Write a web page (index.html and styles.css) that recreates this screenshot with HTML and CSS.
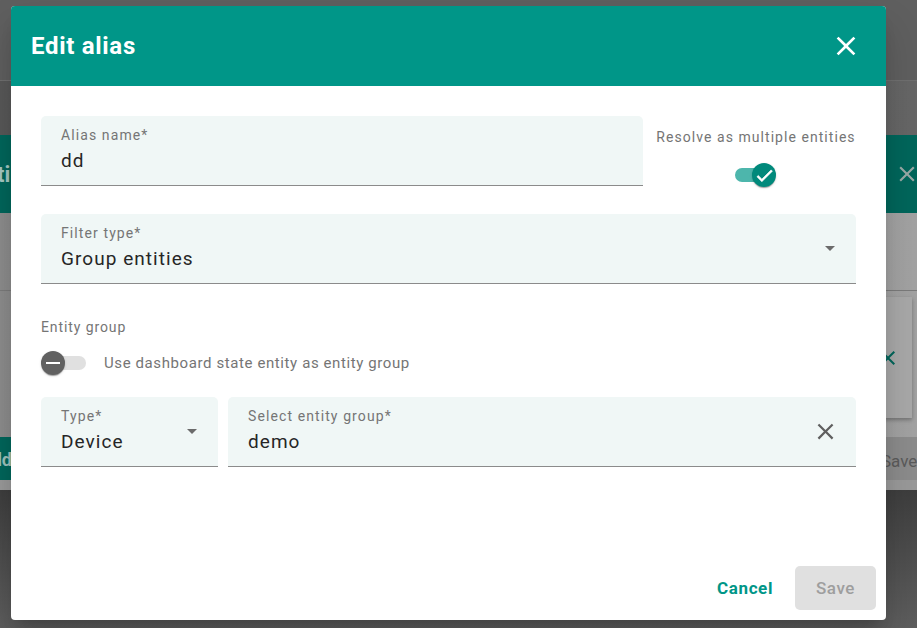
FILE: index.html
```html
<!DOCTYPE html>
<html lang="en">
<head>
  <meta charset="UTF-8" />
  <meta name="viewport" content="width=device-width, initial-scale=1.0" />
  <title>Edit alias</title>
  <link rel="stylesheet" href="styles.css">
</head>
<body>

  <!-- page behind the modal, dimmed -->
  <div class="backdrop">
    <div class="bg-top"></div>
    <div class="bg-gap"></div>
    <div class="bg-head">
      <span class="bg-title">ti</span>
      <svg class="bg-close" viewBox="0 0 24 24"><path d="M19 6.41L17.59 5 12 10.59 6.41 5 5 6.41 10.59 12 5 17.59 6.41 19 12 13.41 17.59 19 19 17.59 13.41 12z"/></svg>
    </div>
    <div class="bg-body">
      <div class="bg-toolbar"></div>
      <div class="bg-list">
        <div class="bg-card">
          <svg class="bg-card-icon" viewBox="0 0 24 24"><path d="M19 6.41L17.59 5 12 10.59 6.41 5 5 6.41 10.59 12 5 17.59 6.41 19 12 13.41 17.59 19 19 17.59 13.41 12z"/></svg>
        </div>
      </div>
      <div class="bg-actions">
        <span class="bg-add">Add</span>
        <span class="bg-save">Save</span>
      </div>
      <div class="bg-foot"></div>
    </div>
    <div class="bg-bottom"></div>
  </div>

  <div class="overlay">
    <div class="dialog">
      <div class="dialog-header">
        <h2>Edit alias</h2>
        <button class="icon-btn">
          <svg viewBox="0 0 24 24"><path d="M19 6.41L17.59 5 12 10.59 6.41 5 5 6.41 10.59 12 5 17.59 6.41 19 12 13.41 17.59 19 19 17.59 13.41 12z"/></svg>
        </button>
      </div>

      <div class="dialog-content">
        <div class="row first-row">
          <div class="field grow">
            <label>Alias name*</label>
            <div class="value">dd</div>
          </div>
          <div class="resolve">
            <span class="hint">Resolve as multiple entities</span>
            <div class="switch on">
              <div class="track"></div>
              <div class="thumb">
                <svg viewBox="0 0 24 24"><path d="M9 16.17L4.83 12l-1.42 1.41L9 19 21 7l-1.41-1.41z"/></svg>
              </div>
            </div>
          </div>
        </div>

        <div class="field select gap-top">
          <label>Filter type*</label>
          <div class="value">Group entities</div>
          <svg class="arrow" viewBox="0 0 24 24"><path d="M7 10l5 5 5-5z"/></svg>
        </div>

        <div class="section-label">Entity group</div>
        <div class="toggle-row">
          <div class="switch off">
            <div class="track"></div>
            <div class="thumb"><span class="minus"></span></div>
          </div>
          <span class="hint">Use dashboard state entity as entity group</span>
        </div>

        <div class="row group-row">
          <div class="field select type">
            <label>Type*</label>
            <div class="value">Device</div>
            <svg class="arrow" viewBox="0 0 24 24"><path d="M7 10l5 5 5-5z"/></svg>
          </div>
          <div class="field grow">
            <label>Select entity group*</label>
            <div class="value">demo</div>
            <svg class="clear" viewBox="0 0 24 24"><path d="M19 6.41L17.59 5 12 10.59 6.41 5 5 6.41 10.59 12 5 17.59 6.41 19 12 13.41 17.59 19 19 17.59 13.41 12z"/></svg>
          </div>
        </div>
      </div>

      <div class="dialog-actions">
        <button class="btn-text">Cancel</button>
        <button class="btn-flat" disabled>Save</button>
      </div>
    </div>
  </div>

</body>
</html>
```

FILE: styles.css
```css
html, body {
  margin: 0;
  height: 100%;
  overflow: hidden;
}

body {
  font-family: Roboto, 'Liberation Sans', sans-serif;
  background: #5c5c5c;
  position: relative;
}

/* ---------- dimmed page behind ---------- */

.backdrop {
  display: flex;
  flex-direction: column;
  height: 100%;
}

.bg-top {
  height: 81px;
  flex-shrink: 0;
  background: #5f5f5f;
  border-bottom: 1px solid #707070;
  box-sizing: border-box;
}

.bg-gap {
  height: 54px;
  flex-shrink: 0;
  background: linear-gradient(90deg, #585858, #666);
}

.bg-head {
  height: 78px;
  flex-shrink: 0;
  background: #00665b;
  display: flex;
  align-items: center;
  justify-content: space-between;
}

.bg-title {
  color: #a6c9c3;
  font-weight: bold;
  font-size: 22px;
  margin-left: -3px;
}

.bg-close {
  width: 26px;
  height: 26px;
  fill: #9aa9a6;
  margin-right: -3px;
}

.bg-body {
  flex-shrink: 0;
  background: linear-gradient(90deg, #8d8d8d, #a3a3a3);
}

.bg-toolbar {
  height: 78px;
  border-bottom: 1px solid #7b7b7b;
  box-sizing: border-box;
}

.bg-list {
  height: 146px;
  display: flex;
  justify-content: flex-end;
  padding-top: 6px;
  box-sizing: border-box;
}

.bg-card {
  width: 28px;
  height: 121px;
  margin-right: 5px;
  background: #a9a9a9;
  box-shadow: 0 2px 4px rgba(0, 0, 0, 0.3);
  display: flex;
  align-items: center;
}

.bg-card-icon {
  width: 24px;
  height: 24px;
  fill: #00665b;
  margin-left: -8px;
}

.bg-actions {
  height: 43px;
  background: #8c8c8c;
  display: flex;
  align-items: center;
  justify-content: space-between;
}

.bg-add {
  background: #00665b;
  color: #9fc2bc;
  font-weight: bold;
  font-size: 18px;
  height: 100%;
  display: flex;
  align-items: flex-end;
  padding: 0 0 10px 0;
  margin-left: -22px;
  box-sizing: border-box;
  width: 34px;
  justify-content: flex-end;
}

.bg-save {
  color: #5b5b5b;
  font-size: 17px;
  padding-top: 4px;
  width: 36px;
}

.bg-foot {
  height: 10px;
  background: #9a9a9a;
}

.bg-bottom {
  flex: 1;
  background: linear-gradient(180deg, #3e3e3e, #5e5e5e);
}

/* ---------- modal ---------- */

.overlay {
  position: absolute;
  inset: 0;
  display: flex;
  padding: 6px 31px 8px 11px;
  box-sizing: border-box;
}

.dialog {
  flex: 1;
  display: flex;
  flex-direction: column;
  background: #fff;
  border-radius: 4px;
  overflow: hidden;
  box-shadow: 0 11px 15px -7px rgba(0,0,0,0.2), 0 24px 38px 3px rgba(0,0,0,0.14);
}

.dialog-header {
  height: 80px;
  flex-shrink: 0;
  background: #009688;
  color: #fff;
  display: flex;
  align-items: center;
  justify-content: space-between;
  padding: 0 24px 0 20px;
}

.dialog-header h2 {
  margin: 0;
  font-size: 24px;
  font-weight: 700;
  letter-spacing: 0.7px;
}

.icon-btn {
  background: none;
  border: none;
  padding: 0;
  width: 32px;
  height: 32px;
  cursor: pointer;
}

.icon-btn svg {
  width: 32px;
  height: 32px;
  fill: #fff;
  display: block;
}

.dialog-content {
  flex: 1;
  padding: 30px 30px 0;
}

.row {
  display: flex;
  gap: 13px;
}

.first-row {
  height: 70px;
}

.grow {
  flex: 1;
}

.field {
  position: relative;
  height: 70px;
  box-sizing: border-box;
  padding: 10px 20px 0;
  background: #f0f7f6;
  border-radius: 5px 5px 0 0;
  border-bottom: 1px solid #8b8b8b;
}

.field label {
  display: block;
  font-size: 14px;
  line-height: 18px;
  color: #757575;
  letter-spacing: 1.1px;
}

.field .value {
  margin-top: 2px;
  font-size: 19px;
  line-height: 30px;
  color: #262626;
  letter-spacing: 1.05px;
}

.field .arrow {
  position: absolute;
  right: 14px;
  top: 22px;
  width: 24px;
  height: 24px;
  fill: #6b6b6b;
}

.field .clear {
  position: absolute;
  right: 17px;
  top: 21px;
  width: 27px;
  height: 27px;
  fill: #5f5f5f;
}

.gap-top {
  margin-top: 28px;
}

.resolve {
  width: 200px;
  display: flex;
  flex-direction: column;
  align-items: center;
  padding-top: 11px;
}

.hint {
  font-size: 14px;
  line-height: 20px;
  color: #757575;
  letter-spacing: 1.05px;
  white-space: nowrap;
}

.switch {
  position: relative;
  width: 46px;
  height: 24px;
  flex-shrink: 0;
}

.resolve .switch {
  margin-top: 16px;
  margin-right: 6px;
}

.switch .track {
  position: absolute;
  left: 5px;
  top: 5px;
  width: 40px;
  height: 14px;
  border-radius: 7px;
}

.switch .thumb {
  position: absolute;
  top: 0;
  width: 24px;
  height: 24px;
  border-radius: 50%;
  display: flex;
  align-items: center;
  justify-content: center;
  box-shadow: 0 2px 1px -1px rgba(0,0,0,0.2), 0 1px 1px rgba(0,0,0,0.14), 0 1px 3px rgba(0,0,0,0.12);
}

.switch.on .track {
  background: #4db6ac;
}

.switch.on .thumb {
  right: 0;
  background: #00897b;
}

.switch.on .thumb svg {
  width: 21px;
  height: 21px;
  fill: #fff;
  stroke: #fff;
  stroke-width: 0.8;
}

.switch.off .track {
  background: #e0e0e0;
}

.switch.off .thumb {
  left: 0;
  background: #616161;
}

.minus {
  width: 14px;
  height: 2px;
  background: #fff;
}

.section-label {
  margin-top: 33px;
  font-size: 14px;
  line-height: 20px;
  color: #757575;
  letter-spacing: 0.9px;
}

.toggle-row {
  display: flex;
  align-items: center;
  gap: 17px;
  margin-top: 14px;
}

.toggle-row .hint {
  font-size: 15px;
  letter-spacing: 0.6px;
}

.group-row {
  gap: 10px;
  margin-top: 22px;
}

.type {
  width: 177px;
}

.dialog-actions {
  display: flex;
  justify-content: flex-end;
  align-items: center;
  gap: 10px;
  padding: 0 10px 10px;
}

.dialog-actions button {
  font-family: Roboto, 'Liberation Sans', sans-serif;
  font-size: 17px;
  height: 44px;
  border: none;
  border-radius: 5px;
  padding: 0 20px;
  letter-spacing: 0.6px;
}

.btn-text {
  background: none;
  color: #009688;
  font-weight: 700;
  cursor: pointer;
  padding: 0 12px !important;
}

.btn-flat {
  background: #e0e0e0;
  color: #9e9e9e;
  font-weight: 500;
  min-width: 81px;
}
```
